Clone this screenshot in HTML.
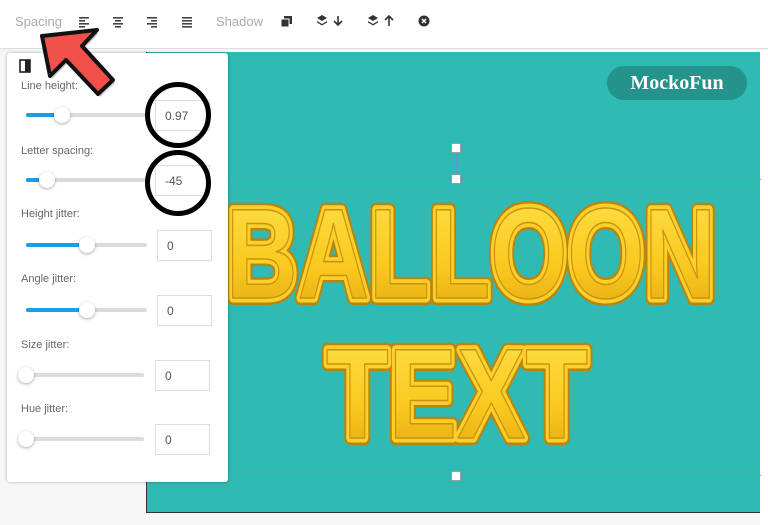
<!DOCTYPE html>
<html><head><style>
*{margin:0;padding:0;box-sizing:border-box}
body{width:768px;height:525px;background:#f6f6f6;position:relative;overflow:hidden;font-family:"Liberation Sans",sans-serif}
.top{position:absolute;left:0;top:0;width:768px;height:49px;background:#fff;border-bottom:1px solid #ddd}
.tb{position:absolute;top:14px;font-size:13px;color:#aaa}
.canvas{position:absolute;left:146px;top:52px;width:614px;height:461px;background:#2fbab3;border-left:1px solid #333;border-bottom:1px solid #333}
.right{position:absolute;left:760px;top:50px;width:8px;height:475px;background:#fff}
.panel{position:absolute;left:7px;top:53px;width:221px;height:429px;background:#fff;border-radius:3px;box-shadow:0 0 3px rgba(0,0,0,.3)}
.lbl{position:absolute;left:21px;font-size:11px;color:#666}
.track{position:absolute;height:4px;background:#d6dce0;border-radius:2px}
.fill{position:absolute;height:4px;background:#1a9fe6;border-radius:2px}
.thumb{position:absolute;width:16px;height:16px;border-radius:50%;background:#fff;box-shadow:0 1px 3px rgba(0,0,0,.35)}
.inp{position:absolute;width:55px;height:31px;border:1px solid #ddd;font-size:12px;color:#555;padding:8px 0 0 9px;background:#fff}
.ring{position:absolute;width:66px;height:66px;border:5px solid #000;border-radius:50%}
</style></head><body>
<div class="top">
<span class="tb" style="left:15px">Spacing</span>
<svg style="position:absolute;left:78px;top:16px" width="12" height="12"><g fill="#444"><rect x="1" y="1" width="10" height="1.6"/><rect x="1" y="4" width="6" height="1.6"/><rect x="1" y="7" width="10" height="1.6"/><rect x="1" y="10" width="6" height="1.6"/></g></svg>
<svg style="position:absolute;left:112px;top:16px" width="12" height="12"><g fill="#444"><rect x="1" y="1" width="10" height="1.6"/><rect x="3" y="4" width="6" height="1.6"/><rect x="1" y="7" width="10" height="1.6"/><rect x="3" y="10" width="6" height="1.6"/></g></svg>
<svg style="position:absolute;left:146px;top:16px" width="12" height="12"><g fill="#444"><rect x="1" y="1" width="10" height="1.6"/><rect x="5" y="4" width="6" height="1.6"/><rect x="1" y="7" width="10" height="1.6"/><rect x="5" y="10" width="6" height="1.6"/></g></svg>
<svg style="position:absolute;left:181px;top:16px" width="12" height="12"><g fill="#444"><rect x="1" y="1" width="10" height="1.6"/><rect x="1" y="4" width="10" height="1.6"/><rect x="1" y="7" width="10" height="1.6"/><rect x="1" y="10" width="10" height="1.6"/></g></svg>
<span class="tb" style="left:216px">Shadow</span>
<svg style="position:absolute;left:280px;top:15px" width="13" height="13"><rect x="4" y="1" width="8" height="8" fill="#333"/><rect x="1" y="4" width="8" height="8" fill="#333" stroke="#fff" stroke-width="1"/></svg>
<svg style="position:absolute;left:316px;top:14px" width="30" height="14"><g fill="#333"><path d="M1 4l5-3 5 3-5 3z"/><path d="M1 7l5 3 5-3v1.5l-5 3-5-3z"/></g><path d="M22 2v9M18 7l4 4 4-4" stroke="#333" stroke-width="1.6" fill="none"/></svg>
<svg style="position:absolute;left:367px;top:14px" width="30" height="14"><g fill="#333"><path d="M1 4l5-3 5 3-5 3z"/><path d="M1 7l5 3 5-3v1.5l-5 3-5-3z"/></g><path d="M22 3v9M18 6l4-4 4 4" stroke="#333" stroke-width="1.6" fill="none"/></svg>
<svg style="position:absolute;left:418px;top:15px" width="13" height="13"><circle cx="6" cy="6" r="5.5" fill="#333"/><path d="M4 4l4 4M8 4l-4 4" stroke="#fff" stroke-width="1.5"/></svg>
</div>
<div class="right"></div>
<div class="canvas">
<div style="position:absolute;left:460px;top:14px;width:140px;height:34px;border-radius:17px;background:#23938c;color:#fff;font:bold 20px 'Liberation Serif',serif;text-align:center;line-height:34px">MockoFun</div>
<div style="position:absolute;left:0;top:127px;width:614px;height:1px;background:#6a8fe0"></div>
<div style="position:absolute;left:0;top:423px;width:614px;height:1px;background:#6a8fe0"></div>
<div style="position:absolute;left:309px;top:96px;width:1px;height:31px;background:#6a8fe0"></div>
</div>
<svg style="position:absolute;left:0;top:0" width="768" height="525">
<defs><linearGradient id="g" x1="0" y1="0" x2="0" y2="1"><stop offset="0" stop-color="#ffe24a"/><stop offset=".6" stop-color="#f9c81e"/><stop offset="1" stop-color="#e0a312"/></linearGradient></defs>
<g font-family="Liberation Sans,sans-serif" font-weight="bold" stroke-linejoin="round">
<g fill="#b98510" stroke="#b98510" stroke-width="14">
<text x="226" y="298" font-size="128" textLength="490" lengthAdjust="spacingAndGlyphs">BALLOON</text>
<text x="326" y="438" font-size="128" textLength="262" lengthAdjust="spacingAndGlyphs">TEXT</text>
</g>
<g fill="url(#g)" stroke="#fccf2a" stroke-width="9">
<text x="226" y="298" font-size="128" textLength="490" lengthAdjust="spacingAndGlyphs">BALLOON</text>
<text x="326" y="438" font-size="128" textLength="262" lengthAdjust="spacingAndGlyphs">TEXT</text>
</g>
<g fill="url(#g)" stroke="#c89312" stroke-width="1.5">
<text x="226" y="298" font-size="128" textLength="490" lengthAdjust="spacingAndGlyphs">BALLOON</text>
<text x="326" y="438" font-size="128" textLength="262" lengthAdjust="spacingAndGlyphs">TEXT</text>
</g>
</g>
<g fill="#fff" stroke="#999" stroke-width="1"><rect x="451.5" y="143.5" width="9" height="9"/><rect x="451.5" y="174.5" width="9" height="9"/><rect x="451.5" y="471.5" width="9" height="9"/></g>
</svg>
<div class="panel">
<svg style="position:absolute;left:12px;top:6px" width="12" height="14"><rect x="1" y="1" width="10" height="12" fill="none" stroke="#222" stroke-width="1.6"/><rect x="6" y="1" width="5" height="12" fill="#222"/></svg>
</div>
<div class="lbl" style="top:80px">Line height:</div>
<div class="track" style="left:26px;top:113px;width:121px"></div><div class="fill" style="left:26px;top:113px;width:36px"></div><div class="thumb" style="left:54px;top:107px"></div>
<div class="inp" style="left:155px;top:100px">0.97</div>
<div class="lbl" style="top:145px">Letter spacing:</div>
<div class="track" style="left:26px;top:178px;width:121px"></div><div class="fill" style="left:26px;top:178px;width:20px"></div><div class="thumb" style="left:39px;top:172px"></div>
<div class="inp" style="left:155px;top:165px">-45</div>
<div class="lbl" style="top:208px">Height jitter:</div>
<div class="track" style="left:26px;top:243px;width:121px"></div><div class="fill" style="left:26px;top:243px;width:60px"></div><div class="thumb" style="left:79px;top:237px"></div>
<div class="inp" style="left:157px;top:230px">0</div>
<div class="lbl" style="top:273px">Angle jitter:</div>
<div class="track" style="left:26px;top:308px;width:121px"></div><div class="fill" style="left:26px;top:308px;width:60px"></div><div class="thumb" style="left:79px;top:302px"></div>
<div class="inp" style="left:157px;top:295px">0</div>
<div class="lbl" style="top:339px">Size jitter:</div>
<div class="track" style="left:22px;top:373px;width:122px"></div><div class="thumb" style="left:18px;top:367px"></div>
<div class="inp" style="left:155px;top:360px">0</div>
<div class="lbl" style="top:403px">Hue jitter:</div>
<div class="track" style="left:22px;top:437px;width:122px"></div><div class="thumb" style="left:18px;top:431px"></div>
<div class="inp" style="left:155px;top:424px">0</div>
<div class="ring" style="left:145px;top:82px"></div>
<div class="ring" style="left:145px;top:150px"></div>
<svg style="position:absolute;left:0;top:0" width="140" height="110">
<path d="M42 36 L97 30 L82 46 L113 80 L98 94 L66 60 L50 76 Z" fill="rgba(0,0,0,.2)" transform="translate(2,3)"/>
<path d="M42 36 L97 30 L82 46 L113 80 L98 94 L66 60 L50 76 Z" fill="#f2504a" stroke="#111" stroke-width="4" stroke-linejoin="round"/>
</svg>
</body></html>
